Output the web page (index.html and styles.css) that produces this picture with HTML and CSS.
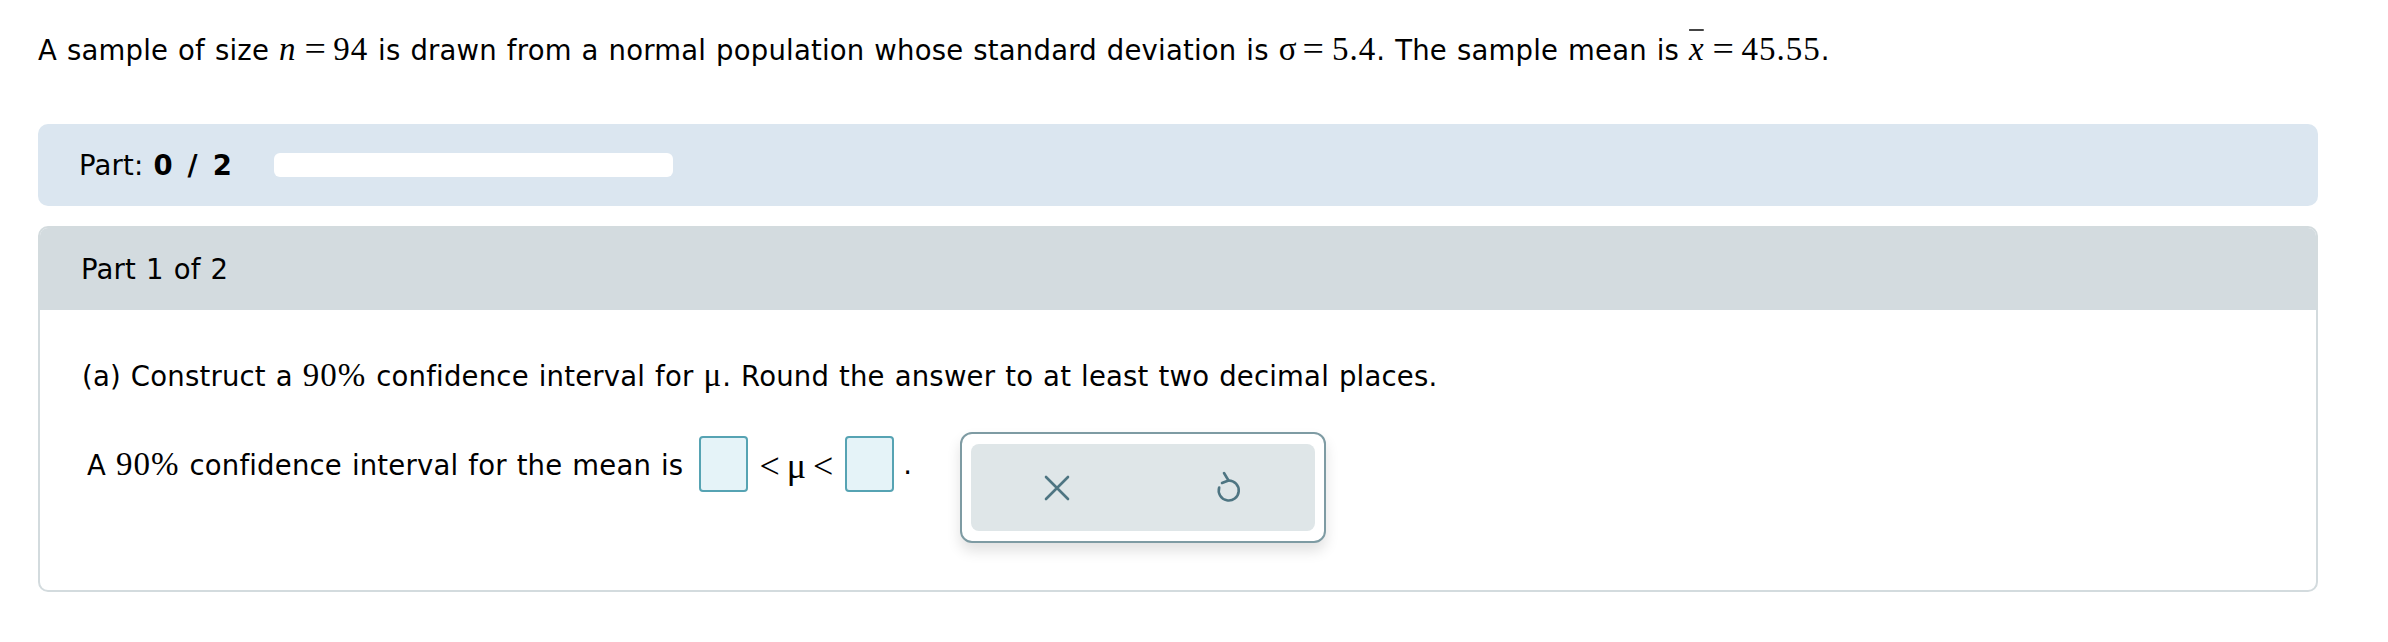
FILE: index.html
```html
<!DOCTYPE html>
<html>
<head>
<meta charset="utf-8">
<link rel="stylesheet" href="styles.css">
</head>
<body>
<div class="page">
  <p class="intro">A sample of size <span class="m"><i>n</i><span class="eq">=</span>94</span> is drawn from a normal population whose standard deviation is <span class="m">σ<span class="eq">=</span>5.4</span>. The sample mean is <span class="m"><i class="bar">x</i><span class="eq">=</span>45.55</span>.</p>

  <div class="partbar">
    <span class="partlabel">Part: <b>0 / 2</b></span>
    <div class="progress"></div>
  </div>

  <div class="card">
    <div class="cardhead">Part 1 of 2</div>
    <div class="cardbody">
      <p class="question">(a) Construct a <span class="m">90%</span> confidence interval for <span class="m">μ</span>. Round the answer to at least two decimal places.</p>
      <div class="answerrow">
        <div class="answer">
          <span class="lead">A <span class="m">90%</span> confidence interval for the mean is</span>
          <span class="box"></span>
          <span class="m ineq">&lt;<span class="mu">μ</span>&lt;</span>
          <span class="box"></span>
          <span class="dot">.</span>
        </div>
        <div class="tools">
          <div class="toolsinner">
            <button class="tool" aria-label="Clear">
              <svg width="26" height="26" viewBox="0 0 26 26"><path d="M2 2 L24 24 M24 2 L2 24" stroke="#4e7582" stroke-width="2.6" fill="none" stroke-linecap="round"/></svg>
            </button>
            <button class="tool" aria-label="Reset">
              <svg width="26" height="34" viewBox="0 0 26 34"><path d="M8 2 L12.5 9.5 L6 12" stroke="#4e7582" stroke-width="2.6" fill="none" stroke-linecap="round" stroke-linejoin="round"/><path d="M12.5 9.5 A10 10 0 1 1 3.2 16.5" stroke="#4e7582" stroke-width="2.6" fill="none" stroke-linecap="round"/></svg>
            </button>
          </div>
        </div>
      </div>
    </div>
  </div>
</div>
</body>
</html>
```

FILE: styles.css
```css
html, body {
  margin: 0;
  padding: 0;
  background: #ffffff;
}
body {
  font-family: "DejaVu Sans", Verdana, sans-serif;
  font-size: 27.5px;
  color: #000000;
  letter-spacing: 0.2px;
  word-spacing: 1px;
}
.page {
  padding: 0 70px 0 38px;
}
.intro {
  margin: 0;
  padding-top: 30px;
  height: 40px;
  line-height: 40px;
  white-space: nowrap;
}
.m {
  font-family: "Liberation Serif", "Times New Roman", serif;
  font-size: 33px;
  line-height: 1;
  letter-spacing: 1px;
  word-spacing: 0;
}
.m i {
  font-style: italic;
  letter-spacing: 0;
  margin-right: 3px;
}
.eq {
  display: inline-block;
  margin: 0 8px 0 7px;
  transform: scaleX(1.15);
}
.bar {
  text-decoration: overline;
  text-decoration-thickness: 2px;
  text-decoration-color: #444;
}
.partbar {
  margin-top: 54px;
  height: 82px;
  background: #dbe6f0;
  border-radius: 10px;
  display: flex;
  align-items: center;
  padding-left: 41px;
  box-sizing: border-box;
}
.partlabel {
  white-space: nowrap;
}
.partlabel b {
  font-weight: bold;
  word-spacing: 5px;
}
.progress {
  margin-left: 42px;
  width: 399px;
  height: 24px;
  background: #ffffff;
  border-radius: 6px;
}
.card {
  margin-top: 20px;
  border: 2px solid #d3dbde;
  border-radius: 10px;
  height: 366px;
  box-sizing: border-box;
  overflow: hidden;
}
.cardhead {
  height: 82px;
  background: #d3dbdf;
  display: flex;
  align-items: center;
  padding-left: 41px;
}
.cardbody {
  padding: 46px 0 0 42px;
}
.question {
  margin: 0;
  height: 40px;
  line-height: 40px;
  white-space: nowrap;
}
.answerrow {
  display: flex;
  align-items: flex-start;
  margin-top: 36px;
}
.answer {
  display: flex;
  align-items: center;
  margin-top: 4px;
  margin-left: 5px;
  white-space: nowrap;
}
.lead {
  margin-right: 16px;
}
.box {
  display: inline-block;
  width: 45px;
  height: 52px;
  border: 2px solid #56a3b3;
  border-radius: 4px;
  background: #e5f3f8;
}
.ineq {
  font-size: 36px;
  margin: 4px 12px 0 11px;
  letter-spacing: 0;
}
.mu {
  margin: 0 7px;
}
.dot {
  margin-left: 9px;
}
.tools {
  margin-left: 48px;
  width: 366px;
  height: 111px;
  box-sizing: border-box;
  border: 2px solid #7e9ba3;
  border-radius: 12px;
  padding: 10px 9px;
  box-shadow: 0 8px 14px rgba(0, 0, 0, 0.12);
  background: #ffffff;
}
.toolsinner {
  height: 100%;
  background: #dfe6e8;
  border-radius: 8px;
  display: flex;
}
.tool {
  flex: 1;
  border: 0;
  background: transparent;
  padding: 0;
  display: flex;
  align-items: center;
  justify-content: center;
}
```
